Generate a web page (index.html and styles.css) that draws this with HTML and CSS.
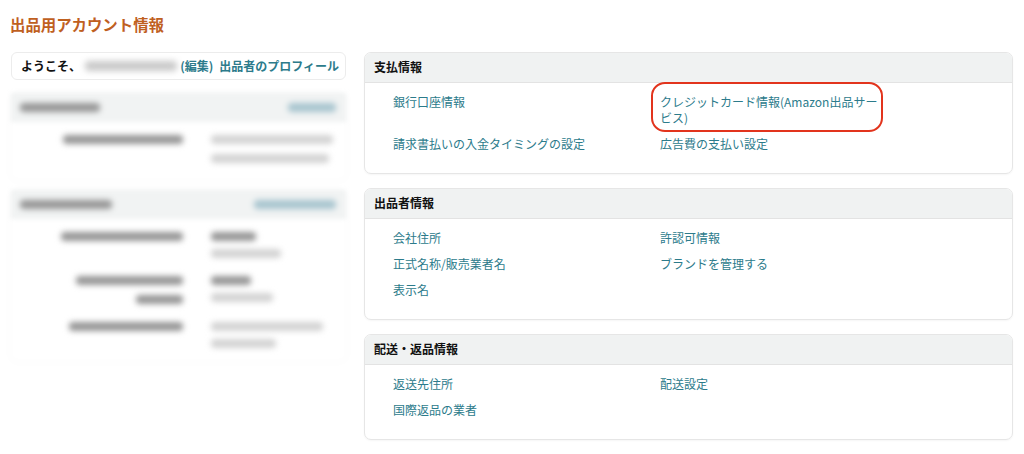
FILE: index.html
```html
<!DOCTYPE html>
<html lang="ja">
<head>
<meta charset="utf-8">
<title>出品用アカウント情報</title>
<link rel="stylesheet" href="styles.css">
</head>
<body>
<h1 class="page-title">出品用アカウント情報</h1>
<div class="layout">
  <aside class="left">
    <div class="welcome">
      <span class="welcome-hi">ようこそ、</span>
      <span class="blur-name"></span>
      <a class="link">(編集)</a>
      <a class="link">出品者のプロフィール</a>
    </div>
    <div class="ghost-card first">
      <div class="ghost-head">
        <span class="bar dark" style="width:80px"></span>
        <span class="bar blue" style="width:48px"></span>
      </div>
      <div class="ghost-row">
        <div class="ghost-l"><span class="bar dark" style="width:120px"></span></div>
        <div class="ghost-r wide"><span class="bar light" style="width:122px"></span><span class="bar light" style="width:118px"></span></div>
      </div>
    </div>
    <div class="ghost-card">
      <div class="ghost-head">
        <span class="bar dark" style="width:92px"></span>
        <span class="bar blue" style="width:82px"></span>
      </div>
      <div class="ghost-row">
        <div class="ghost-l"><span class="bar dark" style="width:122px"></span></div>
        <div class="ghost-r"><span class="bar dark" style="width:45px"></span><span class="bar light" style="width:70px"></span></div>
      </div>
      <div class="ghost-row">
        <div class="ghost-l"><span class="bar dark" style="width:107px"></span><span class="bar dark" style="width:47px"></span></div>
        <div class="ghost-r"><span class="bar dark" style="width:40px"></span><span class="bar light" style="width:62px"></span></div>
      </div>
      <div class="ghost-row">
        <div class="ghost-l"><span class="bar dark" style="width:114px"></span></div>
        <div class="ghost-r"><span class="bar light" style="width:112px"></span><span class="bar light" style="width:65px"></span></div>
      </div>
    </div>
  </aside>
  <main class="right">
    <section class="card">
      <h2 class="card-head">支払情報</h2>
      <div class="card-body">
        <a class="link">銀行口座情報</a>
        <a class="link circled">クレジットカード情報(Amazon出品サービス)</a>
        <a class="link">請求書払いの入金タイミングの設定</a>
        <a class="link">広告費の支払い設定</a>
      </div>
    </section>
    <section class="card">
      <h2 class="card-head">出品者情報</h2>
      <div class="card-body">
        <a class="link">会社住所</a>
        <a class="link">許認可情報</a>
        <a class="link">正式名称/販売業者名</a>
        <a class="link">ブランドを管理する</a>
        <a class="link">表示名</a>
      </div>
    </section>
    <section class="card">
      <h2 class="card-head">配送・返品情報</h2>
      <div class="card-body">
        <a class="link">返送先住所</a>
        <a class="link">配送設定</a>
        <a class="link">国際返品の業者</a>
      </div>
    </section>
    <section class="card stub"></section>
  </main>
</div>
</body>
</html>
```
FILE: styles.css
```css
* { box-sizing: border-box; }
html, body { margin: 0; padding: 0; background: #fff; }
body {
  font-family: "Noto Sans CJK JP", "Noto Sans", "Liberation Sans", sans-serif;
  font-size: 12px;
  color: #111;
  padding: 0 11px 0 10px;
  overflow: hidden;
  height: 454px;
}
.page-title {
  margin: 0;
  padding-top: 13px;
  height: 52px;
  font-size: 15.4px;
  line-height: 22px;
  font-weight: 700;
  color: #bf601f;
}
.layout {
  display: flex;
  gap: 18px;
  align-items: flex-start;
}
.left { width: 336px; flex: none; padding-left: 1px; }
.right { flex: 1; display: flex; flex-direction: column; gap: 14px; }
.link { color: #2c7b8b; text-decoration: none; cursor: pointer; }

.welcome {
  height: 28px;
  border: 1px solid #ececec;
  border-radius: 6px;
  display: flex;
  align-items: center;
  padding-left: 9px;
  font-size: 12px;
  line-height: 16px;
  white-space: nowrap;
}
.welcome-hi { font-weight: 700; color: #111; }
.blur-name {
  width: 94px;
  height: 10px;
  margin: 0 3px 0 4px;
  background: #c9c9c9;
  border-radius: 4px;
  filter: blur(3px);
}
.welcome .link { font-weight: 700; margin-right: 6px; }

.ghost-card {
  margin-top: 10px;
  border-radius: 6px;
  box-shadow: 0 0 4px rgba(0,0,0,0.05);
  filter: blur(2px);
  padding-bottom: 8px;
}
.ghost-card.first { margin-top: 13px; padding-bottom: 12px; }
.ghost-head {
  height: 29px;
  background: #f1f3f3;
  display: flex;
  align-items: center;
  justify-content: space-between;
  padding: 0 10px 0 9px;
}
.ghost-row {
  display: flex;
  padding: 13px 0 5px;
  min-height: 42px;
}
.ghost-l {
  width: 172px;
  display: flex;
  flex-direction: column;
  align-items: flex-end;
  gap: 10px;
}
.ghost-r {
  padding-left: 28px;
  display: flex;
  flex-direction: column;
  gap: 8px;
}
.ghost-r.wide { gap: 10px; }
.bar { display: block; height: 9px; border-radius: 4px; filter: blur(2px); }
.bar.dark { background: #959595; }
.bar.light { background: #d3d3d3; }
.bar.blue { background: #a6c4ce; }

.card {
  border: 1px solid #e6e6e6;
  border-radius: 7px;
  overflow: hidden;
  box-shadow: 0 1px 2px rgba(0,0,0,0.04);
}
.card-head {
  margin: 0;
  height: 30px;
  background: #f0f2f2;
  border-bottom: 1px solid #e3e3e3;
  font-size: 12px;
  line-height: 27px;
  font-weight: 700;
  padding-left: 9px;
  color: #111;
}
.card-body {
  display: grid;
  grid-template-columns: 267px 226px;
  row-gap: 10px;
  padding: 11px 0 21px 28px;
  font-size: 12px;
  line-height: 16px;
}
.circled { position: relative; }
.circled::after {
  content: "";
  position: absolute;
  left: -9px;
  top: -12px;
  width: 228px;
  height: 46px;
  border: 2px solid #e2341d;
  border-radius: 14px;
}
.stub { height: 20px; border-bottom: none; }
```
